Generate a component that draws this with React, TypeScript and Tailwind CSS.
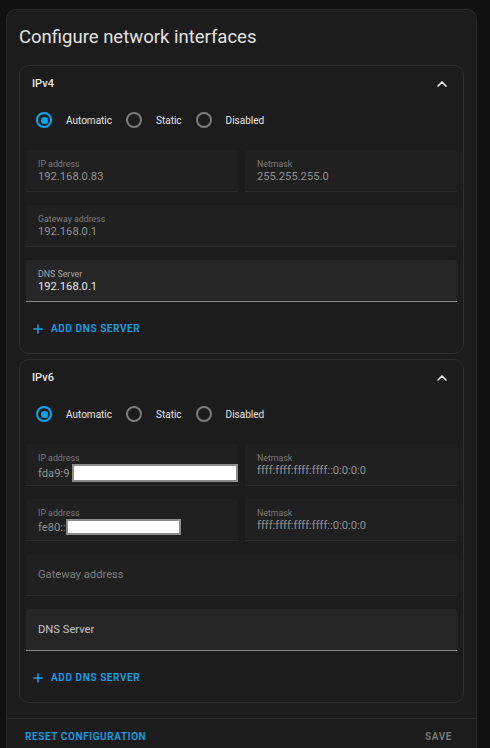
import { ChevronUp, Plus } from 'lucide-react'

type Field = {
  label: string
  value?: string
  redact?: [number, number, number]
  enabled?: boolean
}

function Radio({ checked }: { checked?: boolean }) {
  return (
    <span
      className={
        'flex h-4 w-4 shrink-0 items-center justify-center rounded-full border-2 ' +
        (checked ? 'border-[#03a9f4]' : 'border-[#7c7c7c]')
      }
    >
      {checked && <span className="h-[7px] w-[7px] rounded-full bg-[#03a9f4]" />}
    </span>
  )
}

function TextField({ label, value, redact, enabled }: Field) {
  const empty = !value
  return (
    <div
      className={
        'flex h-[42px] flex-col border-b px-3 rounded-t-[3px] ' +
        (empty ? 'justify-center ' : 'pt-[9px] ') +
        (enabled ? 'bg-[#262626] border-[#8a8a8a]' : 'bg-[#202020] border-[#2c2c2c]')
      }
    >
      {empty ? (
        <span className={'text-[11.2px] leading-none ' + (enabled ? 'text-[#c4c4c4]' : 'text-[#7d7d7d]')}>
          {label}
        </span>
      ) : (
        <>
          <span className={'text-[8.8px] leading-[11px] ' + (enabled ? 'text-[#a3a3a3]' : 'text-[#7a7a7a]')}>
            {label}
          </span>
          <span
            className={
              'flex items-center whitespace-nowrap text-[11.2px] leading-[13px] ' +
              (enabled ? 'text-[#e6e6e6]' : 'text-[#8f8f8f]')
            }
          >
            {value}
            {redact && (
              <span
                className="inline-block shrink-0 border-2 border-[#8c8c8c] bg-white"
                style={{ width: redact[0], height: redact[1], marginLeft: redact[2] }}
              />
            )}
          </span>
        </>
      )}
    </div>
  )
}

function AddDns() {
  return (
    <div className="flex h-[27px] items-center pl-[5px] text-[#1a9fe4]">
      <Plus size={14} strokeWidth={2.6} />
      <span className="ml-[6px] text-[10px] font-semibold tracking-[0.6px]">ADD DNS SERVER</span>
    </div>
  )
}

function Panel({
  title,
  rows,
  gateway,
  dns,
}: {
  title: string
  rows: Field[][]
  gateway: Field
  dns: Field
}) {
  return (
    <section className="rounded-[10px] border border-[#303030]">
      <header className="flex h-9 items-center justify-between pl-3 pr-[13px]">
        <span className="text-[11px] font-medium text-[#e8e8e8]">{title}</span>
        <ChevronUp size={16} strokeWidth={2.6} className="text-[#e8e8e8]" />
      </header>
      <div className="px-[6px] pb-[11px]">
        <div className="mt-[3px] mb-[15px] flex h-[30px] items-center gap-[14px] pl-[10px] text-[10px] text-[#e6e6e6]">
          <Radio checked />
          <span>Automatic</span>
          <Radio />
          <span>Static</span>
          <Radio />
          <span>Disabled</span>
        </div>
        <div className="flex flex-col gap-[13px]">
          {rows.map((row, i) => (
            <div key={i} className="grid grid-cols-2 gap-[7px]">
              {row.map((f) => (
                <TextField key={f.label} {...f} />
              ))}
            </div>
          ))}
          <TextField {...gateway} />
          <TextField {...dns} />
        </div>
        <div className="mt-[13px]">
          <AddDns />
        </div>
      </div>
    </section>
  )
}

export default function App() {
  return (
    <div
      className="flex min-h-screen w-[490px] bg-[#111111] pl-[6px] pt-[9px]"
      style={{ fontFamily: 'Roboto, "Liberation Sans", sans-serif' }}
    >
      <div className="w-[471px] rounded-t-[10px] border border-b-0 border-[#2a2a2a] bg-[#1c1c1c]">
        <div className="pl-3 pr-[12px] pt-[15px]">
          <h1 className="mb-[16px] text-[18.5px] leading-6 text-[#e4e4e4]">Configure network interfaces</h1>
          <div className="flex flex-col gap-[5px]">
            <Panel
              title="IPv4"
              rows={[[{ label: 'IP address', value: '192.168.0.83' }, { label: 'Netmask', value: '255.255.255.0' }]]}
              gateway={{ label: 'Gateway address', value: '192.168.0.1' }}
              dns={{ label: 'DNS Server', value: '192.168.0.1', enabled: true }}
            />
            <Panel
              title="IPv6"
              rows={[
                [
                  { label: 'IP address', value: 'fda9:9', redact: [166, 18, 3] },
                  { label: 'Netmask', value: 'ffff:ffff:ffff:ffff::0:0:0:0' },
                ],
                [
                  { label: 'IP address', value: 'fe80::', redact: [115, 16, 0] },
                  { label: 'Netmask', value: 'ffff:ffff:ffff:ffff::0:0:0:0' },
                ],
              ]}
              gateway={{ label: 'Gateway address' }}
              dns={{ label: 'DNS Server', enabled: true }}
            />
          </div>
        </div>
        <div className="mt-[15px] flex h-[40px] items-start justify-between border-t border-[#2e2e2e] px-[18px] pt-[10px] text-[10px] font-semibold tracking-[0.6px]">
          <span className="text-[#1a9fe4]">RESET CONFIGURATION</span>
          <span className="pr-[6px] text-[#7a7a7a]">SAVE</span>
        </div>
      </div>
    </div>
  )
}
